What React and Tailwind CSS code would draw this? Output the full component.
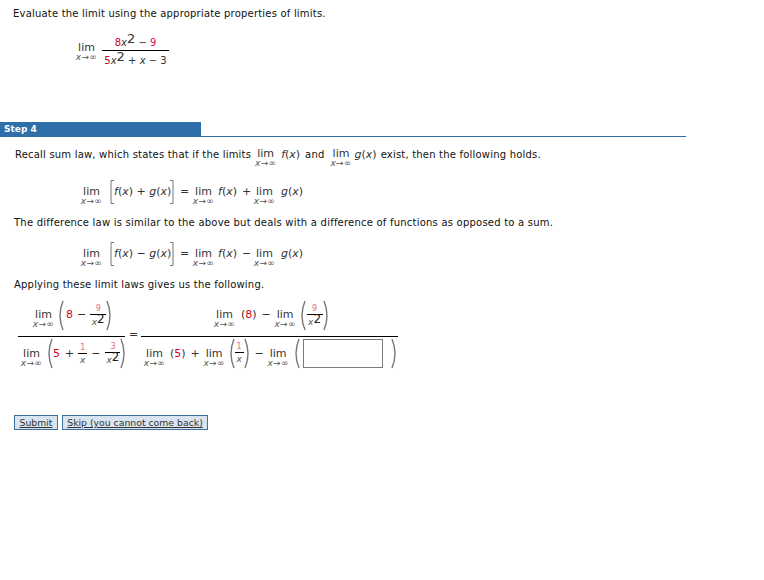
const Lim = ({ className = "" }) => (
  <span className={"inline-flex w-[23px] shrink-0 flex-col items-center leading-none " + className}>
    <span className="text-[11px] leading-[10px] text-[#333]">lim</span>
    <span className="text-[9px] leading-[9px] tracking-[0.3px] text-[#555] whitespace-nowrap">
      <i>x</i>→∞
    </span>
  </span>
);

const Fn = ({ n }) => (
  <span className="whitespace-nowrap text-[11px] text-[#333]">
    <i>{n}</i>(<i>x</i>)
  </span>
);

const Red = ({ children }) => <span className="text-[#d0021b]">{children}</span>;

// tall paren, drawn because no font glyph stretches like this
const Paren = ({ h = 31, flip = false }) => (
  <svg width="7" height={h} viewBox={`0 0 7 ${h}`} className={flip ? "shrink-0 -scale-x-100" : "shrink-0"}>
    <path d={`M6 1 Q0 ${h / 2} 6 ${h - 1}`} fill="none" stroke="#777" strokeWidth="1.4" />
  </svg>
);

const Bracket = ({ flip = false }) => (
  <svg width="4" height="24" viewBox="0 0 4 24" className={flip ? "shrink-0 -scale-x-100" : "shrink-0"}>
    <path d="M4 0.5H1V23.5H4" fill="none" stroke="#777" strokeWidth="1" />
  </svg>
);

const Small = ({ top, bot, w }) => (
  <span className={"inline-flex flex-col items-center leading-none " + w}>
    <span className="text-[8px] leading-[11px] text-[#e0707a]">{top}</span>
    <span className="w-full border-t border-black text-center text-[9px] leading-[13px] text-[#555] whitespace-nowrap">{bot}</span>
  </span>
);

const XSq = () => (
  <span className="whitespace-nowrap">
    <i>x</i>
    <span className="relative -top-[2px] text-[12px] text-[#222]">2</span>
  </span>
);

const LawRow = ({ sign }) => (
  <div className="ml-[80px] flex h-[28px] items-center text-[11px] text-[#333]">
    <Lim className="pt-[9px]" />
    <span className="ml-[7px]"><Bracket /></span>
    <span className="w-[56px] whitespace-nowrap text-center"><Fn n="f" /> {sign} <Fn n="g" /></span>
    <Bracket flip />
    <span className="ml-[6px] w-[7px] text-center">=</span>
    <Lim className="ml-[5px] pt-[9px]" />
    <span className="ml-[3px]"><Fn n="f" /></span>
    <span className="ml-[5px] w-[7px] text-center">{sign}</span>
    <Lim className="ml-[4px] pt-[9px]" />
    <span className="ml-[5px]"><Fn n="g" /></span>
  </div>
);

export default function App() {
  return (
    <div className="h-[580px] w-[764px] overflow-hidden bg-white pt-[8px] font-['DejaVu_Sans',Verdana,sans-serif] text-[10px] leading-[12px] text-[#111]">
      <p className="ml-[13px] tracking-[0.2px]">Evaluate the limit using the appropriate properties of limits.</p>

      <div className="ml-[75px] mt-[14px] flex h-[32px] items-center">
        <Lim className="mb-[4px] pt-[9px]" />
        <div className="ml-[4px] flex w-[67px] flex-col items-center text-[10px] text-[#333]">
          <div className="h-[16px] whitespace-nowrap leading-[15px]">
            <Red>8</Red><i>x</i><span className="relative -top-[3px] text-[13px]">2</span> − <span className="text-[#e0006a]">9</span>
          </div>
          <div className="h-[16px] w-full whitespace-nowrap border-t border-black text-center leading-[17px]">
            <Red>5</Red><i>x</i><span className="relative -top-[3px] text-[13px]">2</span> + <i>x</i> − 3
          </div>
        </div>
      </div>

      <div className="mt-[56px] mr-[78px] border-b border-[#2e6ea9]">
        <div className="h-[14px] w-[201px] bg-[#2e6ea9] pl-[4px] text-[9px] font-bold leading-[15px] text-white">Step 4</div>
      </div>

      <div className="ml-[15px] mt-[12px] flex h-[20px] items-start whitespace-nowrap tracking-[0.2px]">
        <span>Recall sum law, which states that if the limits</span>
        <Lim className="ml-[3px] tracking-normal" />
        <span className="ml-[4px] tracking-normal"><Fn n="f" /></span>
        <span className="ml-[5px]">and</span>
        <Lim className="ml-[5px] tracking-normal" />
        <span className="ml-[2px] tracking-normal"><Fn n="g" /></span>
        <span className="ml-[4px]">exist, then the following holds.</span>
      </div>

      <div className="mt-[9px]"><LawRow sign="+" /></div>

      <p className="ml-[14px] mt-[11px] tracking-[0.22px]">The difference law is similar to the above but deals with a difference of functions as opposed to a sum.</p>

      <div className="mt-[11px]"><LawRow sign="−" /></div>

      <p className="ml-[14px] mt-[11px] tracking-[0.2px]">Applying these limit laws gives us the following.</p>

      <div className="ml-[18px] mt-[9px] flex items-start text-[11px] text-[#333]">
        <div className="flex w-[107px] flex-col">
          <div className="flex h-[36px] items-center pb-[6px] pl-[14px]">
            <Lim className="pt-[9px]" />
            <span className="ml-[2px]"><Paren /></span>
            <span className="ml-[2px]"><Red>8</Red></span>
            <span className="ml-[4px]">−</span>
            <span className="ml-[4px]"><Small w="w-[16px]" top="9" bot={<XSq />} /></span>
            <Paren flip />
          </div>
          <div className="flex h-[34px] items-center border-t border-black pl-[2px]">
            <Lim className="pt-[9px]" />
            <span className="ml-[3px]"><Paren /></span>
            <Red>5</Red>
            <span className="ml-[5px]">+</span>
            <span className="ml-[4px]"><Small w="w-[9px]" top="1" bot={<i>x</i>} /></span>
            <span className="ml-[4px]">−</span>
            <span className="ml-[5px]"><Small w="w-[15px]" top="3" bot={<XSq />} /></span>
            <Paren flip />
          </div>
        </div>

        <span className="ml-[4px] mt-[29px] w-[7px] text-center">=</span>

        <div className="ml-[5px] flex w-[257px] flex-col">
          <div className="flex h-[36px] items-center pb-[6px] pl-[72px]">
            <Lim className="pt-[9px]" />
            <span className="ml-[5px]">(<Red>8</Red>)</span>
            <span className="ml-[5px] w-[7px] text-center">−</span>
            <Lim className="ml-[5px] pt-[9px]" />
            <span className="ml-[2px]"><Paren /></span>
            <span className="ml-[1px]"><Small w="w-[16px]" top="9" bot={<XSq />} /></span>
            <Paren flip />
          </div>
          <div className="flex h-[34px] items-center border-t border-black pl-[2px]">
            <Lim className="pt-[9px]" />
            <span className="ml-[4px]">(<Red>5</Red>)</span>
            <span className="ml-[5px] w-[7px] text-center">+</span>
            <Lim className="ml-[5px] pt-[9px]" />
            <span className="ml-[2px]"><Paren /></span>
            <Small w="w-[9px]" top="1" bot={<i>x</i>} />
            <Paren flip />
            <span className="ml-[4px] w-[7px] text-center">−</span>
            <Lim className="ml-[5px] pt-[9px]" />
            <span className="ml-[3px]"><Paren /></span>
            <span className="ml-[3px] block h-[29px] w-[80px] shrink-0 border border-[#7a7a7a] bg-white" />
            <span className="ml-[8px]"><Paren flip /></span>
          </div>
        </div>
      </div>

      <div className="ml-[14px] mt-[45px] flex gap-[4px] text-[9.3px] text-[#333]">
        <button className="h-[15px] w-[44px] border border-[#3f6f9f] bg-[#d8e4f0] leading-[13px] underline">Submit</button>
        <button className="h-[15px] w-[146px] whitespace-nowrap border border-[#3f6f9f] bg-[#d8e4f0] leading-[13px] underline">Skip (you cannot come back)</button>
      </div>
    </div>
  );
}
